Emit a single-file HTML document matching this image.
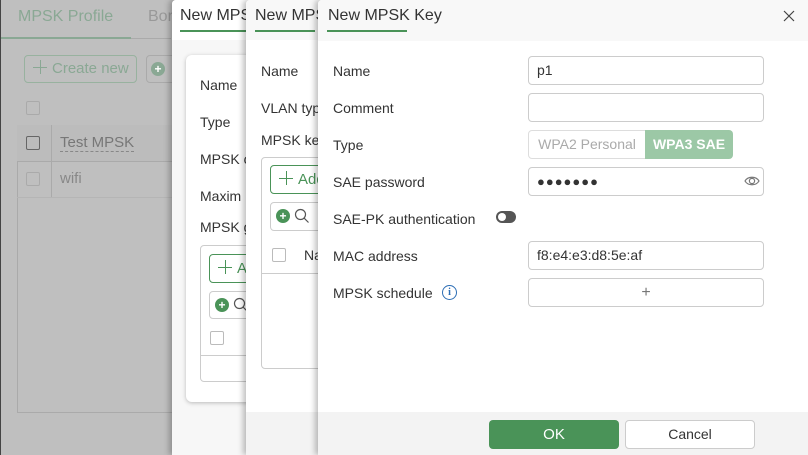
<!DOCTYPE html>
<html><head><meta charset="utf-8"><style>
*{box-sizing:border-box;margin:0;padding:0}
body{width:808px;height:455px;overflow:hidden;background:#bfbfbf;font-family:"Liberation Sans",sans-serif;font-size:14px;color:#333;position:relative}
.a{position:absolute}
.cb{position:absolute;width:14px;height:14px;border:1px solid #999;border-radius:2px;background:transparent}
.inp{position:absolute;border:1px solid #ccc;border-radius:4px;background:#fff;height:29px;padding-left:8px;line-height:27px;font-size:14px;color:#333}
.lbl{position:absolute;font-size:14px;color:#333}
.gbtn{position:absolute;border:1px solid #4a9358;border-radius:4px;color:#4a9358;font-size:15px;background:#fff}
.plus{display:inline-block;position:relative;width:14px;height:14px;vertical-align:-1px;margin-right:5px}
.plus:before{content:"";position:absolute;left:6.5px;top:0;width:1.3px;height:14px;background:currentColor}
.plus:after{content:"";position:absolute;top:6.5px;left:0;height:1.3px;width:14px;background:currentColor}
.gc{position:absolute;width:14px;height:14px;border-radius:50%;background:#4a9358;color:#fff;font-size:12px;line-height:14px;text-align:center;font-weight:bold}
.modal{position:absolute;top:0;height:455px;background:#fff;box-shadow:-3px 0 6px rgba(0,0,0,.25);overflow:hidden;border-radius:4px 0 0 0}
.title{position:absolute;top:7px;font-size:16px;color:#333}
.uline{position:absolute;top:30px;height:2px;background:#4a9358}
</style></head><body>
<div class="a" style="left:0;top:0;width:1px;height:455px;background:#444"></div>
<div class="a" style="left:18px;top:8px;font-size:16px;color:#8aa894">MPSK Profile</div>
<div class="a" style="left:148px;top:8px;font-size:16px;color:#999">Bor</div>
<div class="a" style="left:1px;top:38px;width:170px;height:1px;background:#aaa"></div>
<div class="a" style="left:1px;top:37px;width:130px;height:2px;background:#8aa894"></div>
<div class="a" style="left:24px;top:55px;width:113px;height:28px;border:1px solid #98b29f;border-radius:4px;color:#8aa894;font-size:15px;line-height:26px;padding-left:8px"><span class="plus"></span>Create new</div>
<div class="a" style="left:146px;top:55px;width:30px;height:28px;border:1px solid #aaa;border-radius:4px"></div>
<div class="gc" style="left:151px;top:62px;background:#8aa894">+</div>
<div class="cb" style="left:26px;top:101px;border-color:#aaa"></div>
<div class="a" style="left:17px;top:125px;width:160px;height:288px;border:1px solid #aaa"></div>
<div class="a" style="left:17px;top:125px;width:160px;height:37px;border-bottom:1px solid #aaa;background:#bcbcbc"></div>
<div class="a" style="left:51px;top:125px;width:1px;height:72px;background:#aaa"></div>
<div class="cb" style="left:26px;top:136px;border-color:#666"></div>
<div class="a" style="left:60px;top:134px;color:#777;font-size:15px;border-bottom:1px dashed #888">Test MPSK</div>
<div class="a" style="left:17px;top:197px;width:160px;height:1px;background:#b5b5b5"></div>
<div class="cb" style="left:26px;top:172px;border-color:#aaa"></div>
<div class="a" style="left:60px;top:170px;color:#888;font-size:15px">wifi</div>

<div class="modal" style="left:172px;width:100px;background:#f7f7f7">
 <div class="a" style="left:0;top:0;width:100px;height:40px;background:#fff"></div>
 <div class="title" style="left:8px">New MPSK</div>
 <div class="uline" style="left:8px;width:70px"></div>
 <div class="a" style="left:14px;top:55px;width:90px;height:347px;background:#fff;border-radius:6px;box-shadow:0 1px 4px rgba(0,0,0,.25)"></div>
 <div class="lbl" style="left:28px;top:77px">Name</div>
 <div class="lbl" style="left:28px;top:114px">Type</div>
 <div class="lbl" style="left:28px;top:151px">MPSK c</div>
 <div class="lbl" style="left:28px;top:188px">Maxim</div>
 <div class="lbl" style="left:28px;top:219px">MPSK g</div>
 <div class="a" style="left:28px;top:245px;width:80px;height:137px;border:1px solid #ccc;border-radius:4px"></div>
 <div class="a" style="left:28px;top:355px;width:80px;height:1px;background:#ccc"></div>
 <div class="gbtn" style="left:37px;top:254px;width:60px;height:29px;line-height:27px;padding-left:8px"><span class="plus"></span>Ad</div>
 <div class="a" style="left:37px;top:291px;width:60px;height:28px;border:1px solid #ccc;border-radius:4px"></div>
 <div class="gc" style="left:43px;top:298px">+</div>
 <svg class="a" style="left:61px;top:297px" width="16" height="16" viewBox="0 0 16 16"><circle cx="6.5" cy="6.5" r="5" fill="none" stroke="#555" stroke-width="1.2"/><path d="M10.2 10.2L14.5 14.5" stroke="#555" stroke-width="1.2"/></svg>
 <div class="cb" style="left:38px;top:331px;border-color:#bbb"></div>
</div>

<div class="modal" style="left:246px;width:100px">
 <div class="a" style="left:0;top:0;width:100px;height:40px;background:#f8f8f8"></div>
 <div class="title" style="left:9px">New MPSK</div>
 <div class="uline" style="left:9px;width:60px"></div>
 <div class="lbl" style="left:15px;top:63px">Name</div>
 <div class="lbl" style="left:15px;top:100px">VLAN type</div>
 <div class="lbl" style="left:15px;top:132px">MPSK key</div>
 <div class="a" style="left:15px;top:157px;width:90px;height:212px;border:1px solid #ccc;border-radius:4px"></div>
 <div class="a" style="left:15px;top:273px;width:90px;height:1px;background:#ccc"></div>
 <div class="gbtn" style="left:24px;top:165px;width:80px;height:29px;line-height:27px;padding-left:8px"><span class="plus"></span>Add</div>
 <div class="a" style="left:24px;top:202px;width:80px;height:29px;border:1px solid #ccc;border-radius:4px"></div>
 <div class="gc" style="left:30px;top:209px">+</div>
 <svg class="a" style="left:48px;top:208px" width="16" height="16" viewBox="0 0 16 16"><circle cx="6.5" cy="6.5" r="5" fill="none" stroke="#555" stroke-width="1.2"/><path d="M10.2 10.2L14.5 14.5" stroke="#555" stroke-width="1.2"/></svg>
 <div class="cb" style="left:26px;top:248px;border-color:#bbb"></div>
 <div class="lbl" style="left:58px;top:247px">Na</div>
 <div class="a" style="left:0;top:412px;width:100px;height:43px;background:#f3f3f3"></div>
</div>

<div class="modal" style="left:318px;width:490px">
 <div class="a" style="left:0;top:0;width:490px;height:41px;background:#f8f8f8"></div>
 <div class="title" style="left:10px">New MPSK Key</div>
 <div class="uline" style="left:9px;width:80px"></div>
 <svg class="a" style="left:465px;top:10px" width="12" height="12" viewBox="0 0 12 12"><path d="M1 1L11 11M11 1L1 11" stroke="#444" stroke-width="1.2"/></svg>
 <div class="lbl" style="left:15px;top:63px">Name</div>
 <div class="inp" style="left:210px;top:56px;width:236px">p1</div>
 <div class="lbl" style="left:15px;top:100px">Comment</div>
 <div class="inp" style="left:210px;top:93px;width:236px"></div>
 <div class="lbl" style="left:15px;top:137px">Type</div>
 <div class="a" style="left:210px;top:130px;width:118px;height:29px;border:1px solid #ddd;border-radius:4px 0 0 4px;color:#aaa;font-size:14px;line-height:27px;text-align:center">WPA2 Personal</div>
 <div class="a" style="left:327px;top:130px;width:88px;height:29px;background:#9cc8a6;border-radius:0 4px 4px 0;color:#fff;font-weight:bold;font-size:14px;line-height:29px;text-align:center">WPA3 SAE</div>
 <div class="lbl" style="left:15px;top:174px">SAE password</div>
 <div class="inp" style="left:210px;top:167px;width:236px;letter-spacing:1px;font-size:13px">●●●●●●●</div>
 <svg class="a" style="left:426px;top:174px" width="16" height="14" viewBox="0 0 16 14"><path d="M1 7C4 2 12 2 15 7C12 12 4 12 1 7Z" fill="none" stroke="#777" stroke-width="1.2"/><circle cx="8" cy="7" r="2.6" fill="none" stroke="#777" stroke-width="1.2"/></svg>
 <div class="lbl" style="left:15px;top:211px">SAE-PK authentication</div>
 <div class="a" style="left:178px;top:211px;width:20px;height:12px;border-radius:6px;background:#555"></div>
 <div class="a" style="left:180px;top:213px;width:8px;height:8px;border-radius:50%;background:#fff"></div>
 <div class="lbl" style="left:15px;top:248px">MAC address</div>
 <div class="inp" style="left:210px;top:241px;width:236px">f8:e4:e3:d8:5e:af</div>
 <div class="lbl" style="left:15px;top:285px">MPSK schedule</div>
 <div class="a" style="left:124px;top:285px;width:15px;height:15px;border:1.3px solid #2d6eb5;border-radius:50%;color:#2d6eb5;font-size:10px;line-height:13px;text-align:center;font-family:'Liberation Serif',serif;font-weight:bold">i</div>
 <div class="inp" style="left:210px;top:278px;width:236px;text-align:center;color:#777;padding:0;font-size:16px">+</div>
 <div class="a" style="left:0;top:412px;width:490px;height:43px;background:#f3f3f3"></div>
 <div class="a" style="left:171px;top:420px;width:130px;height:29px;background:#4a9358;border-radius:4px;color:#fff;font-size:15px;line-height:29px;text-align:center">OK</div>
 <div class="a" style="left:307px;top:420px;width:130px;height:29px;background:#fff;border:1px solid #ccc;border-radius:4px;color:#333;font-size:14px;line-height:27px;text-align:center">Cancel</div>
</div>
</body></html>
